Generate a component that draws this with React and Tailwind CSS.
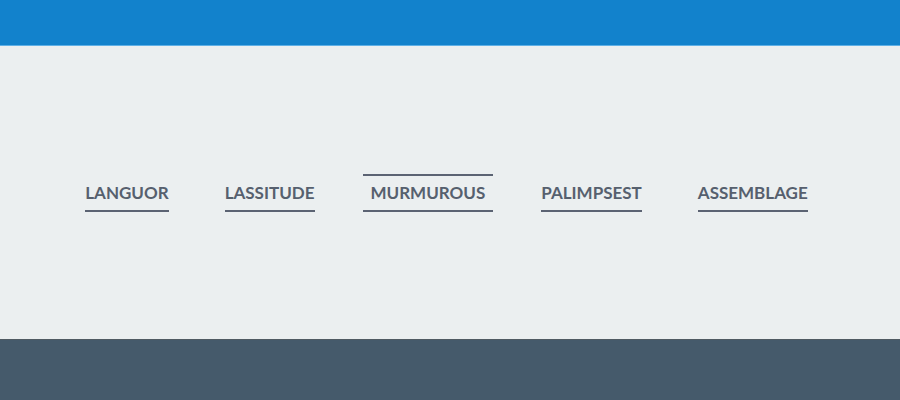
const items = ["Languor", "Lassitude", "Murmurous", "Palimpsest", "Assemblage"];

export default function App() {
  const active = 2;
  return (
    <div className="flex h-[400px] w-[900px] flex-col bg-[#ebeff0] font-['Lato','Liberation_Sans',sans-serif]">
      <header className="h-[46px] border-b border-[#5fb0e6] bg-[#1282cc]" />
      <main className="flex flex-1 items-center justify-center">
        <nav className="mr-[7px] flex items-center gap-[40px]">
          {items.map((label, i) => (
            <a
              key={label}
              href="#"
              className={
                "border-t-2 px-[8px] pt-[7px] text-[17px] font-bold uppercase leading-[20px] text-[#56606e] " +
                (i === active ? "border-b-2 border-[#5b6373] pb-[7px]" : "border-transparent")
              }
            >
              <span className={i === active ? "block" : "block border-b-2 border-[#5b6373] pb-[7px]"}>
                {label}
              </span>
            </a>
          ))}
        </nav>
      </main>
      <footer className="h-[61px] border-t border-[#4f5a62] bg-[#455a6b]" />
    </div>
  );
}
